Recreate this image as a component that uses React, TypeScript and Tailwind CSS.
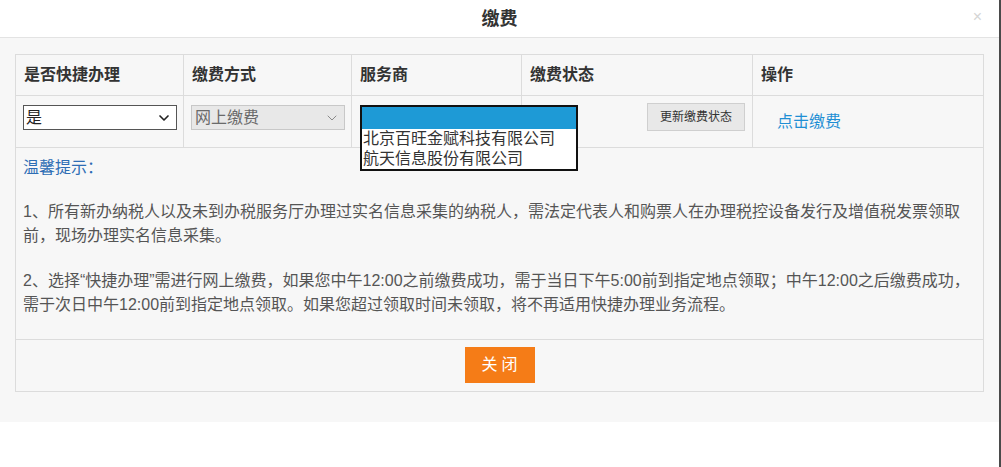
import { ChevronDown } from 'lucide-react';

const FONT = { fontFamily: '"Liberation Sans", "Noto Sans CJK SC", sans-serif' };

const columns = ['是否快捷办理', '缴费方式', '服务商', '缴费状态', '操作'];
const providers = ['北京百旺金赋科技有限公司', '航天信息股份有限公司'];

const PaymentDialog = () => {
    return (
        <div className="w-[1001px] h-[467px] bg-white border-r-2 border-[#4a4a4a] flex flex-col" style={FONT}>
            {/* Title bar */}
            <div className="h-[38px] border-b border-[#e3e3e3] flex items-center justify-center relative">
                <h2 className="text-[18px] font-bold text-[#333] leading-none">缴费</h2>
                <span className="absolute right-[17px] top-[9px] text-[16px] text-[#d5d5d5] leading-none">×</span>
            </div>

            {/* Body */}
            <div className="bg-[#f7f7f7] pt-[16px] px-[15px] pb-[30px]">
                <div className="border border-[#dcdcdc]">
                    {/* Table header */}
                    <div className="grid grid-cols-[168px_168px_170px_231px_1fr] h-[41px] border-b border-[#dcdcdc]">
                        {columns.map((c, i) => (
                            <div
                                key={c}
                                className={`flex items-center pl-[8px] text-[16px] font-bold text-[#333] ${i < 4 ? 'border-r border-[#dcdcdc]' : ''}`}
                            >
                                {c}
                            </div>
                        ))}
                    </div>

                    {/* Data row */}
                    <div className="grid grid-cols-[168px_168px_170px_231px_1fr] h-[52px] border-b border-[#dcdcdc]">
                        <div className="border-r border-[#dcdcdc] pl-[7px] pt-[9px]">
                            <div className="w-[154px] h-[25px] bg-white border border-[#555] flex items-center justify-between pl-[2px] pr-[4px]">
                                <span className="text-[16px] text-[#222] leading-none">是</span>
                                <ChevronDown size={16} strokeWidth={2.5} className="text-[#222]" />
                            </div>
                        </div>
                        <div className="border-r border-[#dcdcdc] pl-[7px] pt-[9px]">
                            <div className="w-[154px] h-[25px] bg-[#e8e8e8] border border-[#c8c8c8] flex items-center justify-between pl-[3px] pr-[4px]">
                                <span className="text-[16px] text-[#6a6a6a] leading-none">网上缴费</span>
                                <ChevronDown size={16} strokeWidth={1.5} className="text-[#8a8a8a]" />
                            </div>
                        </div>
                        <div className="border-r border-[#dcdcdc] relative">
                            {/* open provider list */}
                            <div className="absolute left-[8px] top-[9px] w-[218px] bg-white border-2 border-[#111] z-10">
                                <div className="h-[22px] bg-[#1e9ad6]" />
                                {providers.map((p) => (
                                    <div key={p} className="h-[20px] pl-[1px] text-[16px] leading-[20px] text-[#333]">
                                        {p}
                                    </div>
                                ))}
                            </div>
                        </div>
                        <div className="border-r border-[#dcdcdc] flex justify-end pr-[7px] pt-[7px]">
                            <button className="w-[98px] h-[28px] bg-[#e8e8e8] border border-[#cfcfcf] text-[12px] text-[#333] leading-none">
                                更新缴费状态
                            </button>
                        </div>
                        <div className="flex items-center pl-[24px] pt-[1px]">
                            <a className="text-[16px] text-[#1f8fd4]">点击缴费</a>
                        </div>
                    </div>

                    {/* Tips */}
                    <div className="px-[7px] pt-[8px] pb-[22px] border-b border-[#dcdcdc] text-[16px] text-[#555] whitespace-nowrap">
                        <p className="leading-[24px] text-[#2d6db4]">温馨提示：</p>
                        <p className="mt-[20px] leading-[24px]">
                            1、所有新办纳税人以及未到办税服务厅办理过实名信息采集的纳税人，需法定代表人和购票人在办理税控设备发行及增值税发票领取
                            <br />
                            前，现场办理实名信息采集。
                        </p>
                        <p className="mt-[21px] leading-[24px]">
                            2、选择“快捷办理”需进行网上缴费，如果您中午12:00之前缴费成功，需于当日下午5:00前到指定地点领取；中午12:00之后缴费成功，
                            <br />
                            需于次日中午12:00前到指定地点领取。如果您超过领取时间未领取，将不再适用快捷办理业务流程。
                        </p>
                    </div>

                    {/* Footer */}
                    <div className="h-[51px] flex justify-center pt-[7px]">
                        <button className="w-[70px] h-[36px] bg-[#f57c17] text-white text-[16px] tracking-[4px] pl-[4px]">
                            关闭
                        </button>
                    </div>
                </div>
            </div>
        </div>
    );
};

export default function App() {
    return <PaymentDialog />;
}
